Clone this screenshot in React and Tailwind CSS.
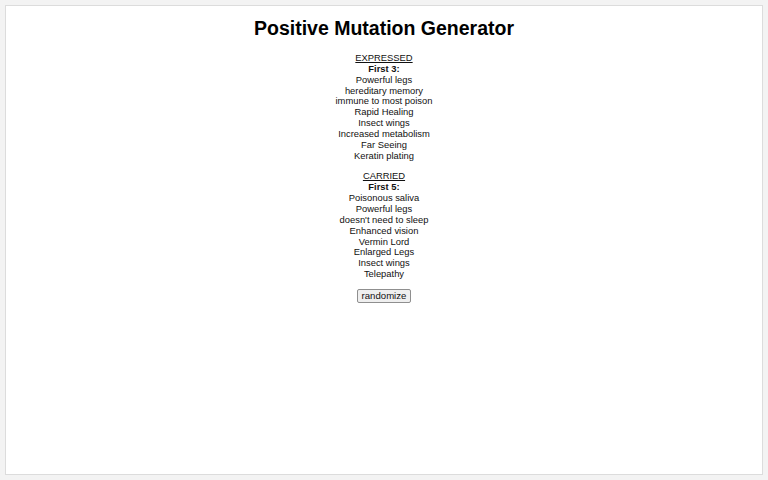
const EXPRESSED = [
  'Powerful legs',
  'hereditary memory',
  'immune to most poison',
  'Rapid Healing',
  'Insect wings',
  'Increased metabolism',
  'Far Seeing',
  'Keratin plating',
]

const CARRIED = [
  'Poisonous saliva',
  'Powerful legs',
  "doesn't need to sleep",
  'Enhanced vision',
  'Vermin Lord',
  'Enlarged Legs',
  'Insect wings',
  'Telepathy',
]

function Section({ title, first, items }) {
  return (
    <div className="flex flex-col items-center">
      <span className="underline">{title}</span>
      <span className="font-bold">{first}</span>
      {items.map((m, i) => (
        <span key={i}>{m}</span>
      ))}
    </div>
  )
}

export default function App() {
  return (
    <div className="h-[480px] bg-[#f3f3f3] p-[5px] font-['Liberation_Sans',Arial,sans-serif] text-black">
      <div className="flex h-full flex-col items-center border border-[#dcdcdc] bg-white pt-[11px]">
        <h1 className="text-[19.5px] font-bold leading-[23px]">Positive Mutation Generator</h1>

        <div className="mt-[13px] flex flex-col items-center gap-[10px] text-[9.4px] leading-[10.85px] text-[#111]">
          <Section title="EXPRESSED" first="First 3:" items={EXPRESSED} />
          <Section title="CARRIED" first="First 5:" items={CARRIED} />
          <button className="-mt-[1px] h-[14px] rounded-[2px] border border-[#8f8f8f] bg-[#efefef] px-[4px] text-[9.6px] leading-[12px]">
            randomize
          </button>
        </div>
      </div>
    </div>
  )
}
